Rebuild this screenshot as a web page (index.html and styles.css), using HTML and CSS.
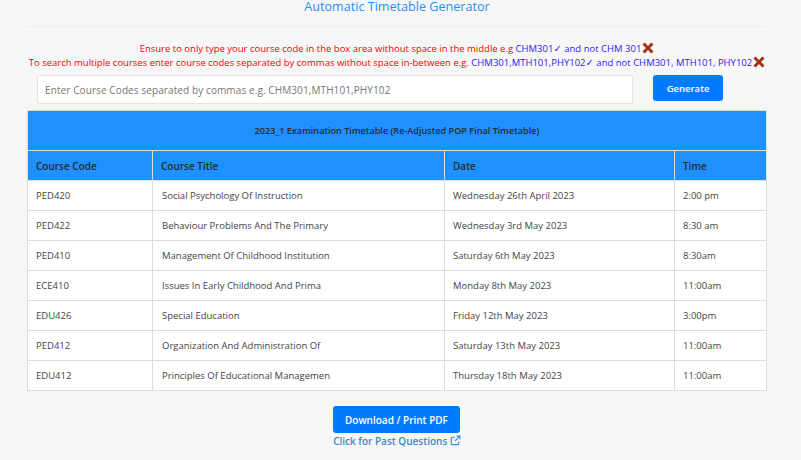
FILE: index.html
```html
<!DOCTYPE html>
<html lang="en">
<head>
<meta charset="utf-8">
<title>Automatic Timetable Generator</title>
<link rel="stylesheet" href="styles.css">
</head>
<body>
<main class="page">
  <h1 class="title">Automatic Timetable Generator</h1>
  <hr class="rule">
  <div class="notes">
    <p class="note">Ensure to only type your course code in the box area without space in the middle e.g <span class="eg">CHM301<span class="tick">✓</span> and not CHM 301</span><svg class="cross" viewBox="0 0 12 12"><path d="M1.5 1.5 10.5 10.5M10.5 1.5 1.5 10.5"/></svg></p>
    <p class="note">To search multiple courses enter course codes separated by commas without space in-between e.g. <span class="eg">CHM301,MTH101,PHY102<span class="tick">✓</span> and not CHM301, MTH101, PHY102</span><svg class="cross" viewBox="0 0 12 12"><path d="M1.5 1.5 10.5 10.5M10.5 1.5 1.5 10.5"/></svg></p>
  </div>
  <form class="search">
    <input class="field" type="text" placeholder="Enter Course Codes separated by commas e.g. CHM301,MTH101,PHY102">
    <button class="btn btn-generate" type="button">Generate</button>
  </form>
  <table class="grid">
    <colgroup>
      <col class="c1"><col class="c2"><col class="c3"><col class="c4">
    </colgroup>
    <thead>
      <tr class="caption-row"><th colspan="4">2023_1 Examination Timetable (Re-Adjusted POP Final Timetable)</th></tr>
      <tr class="head-row"><th>Course Code</th><th>Course Title</th><th>Date</th><th>Time</th></tr>
    </thead>
    <tbody>
      <tr><td>PED420</td><td>Social Psychology Of Instruction</td><td>Wednesday 26th April 2023</td><td>2:00 pm</td></tr>
      <tr><td>PED422</td><td>Behaviour Problems And The Primary</td><td>Wednesday 3rd May 2023</td><td>8:30 am</td></tr>
      <tr><td>PED410</td><td>Management Of Childhood Institution</td><td>Saturday 6th May 2023</td><td>8:30am</td></tr>
      <tr><td>ECE410</td><td>Issues In Early Childhood And Prima</td><td>Monday 8th May 2023</td><td>11:00am</td></tr>
      <tr><td>EDU426</td><td>Special Education</td><td>Friday 12th May 2023</td><td>3:00pm</td></tr>
      <tr><td>PED412</td><td>Organization And Administration Of</td><td>Saturday 13th May 2023</td><td>11:00am</td></tr>
      <tr><td>EDU412</td><td>Principles Of Educational Managemen</td><td>Thursday 18th May 2023</td><td>11:00am</td></tr>
    </tbody>
  </table>
  <div class="actions">
    <button class="btn btn-download" type="button">Download / Print PDF</button>
    <a class="past" href="#">Click for Past Questions <svg class="ext" viewBox="0 0 12 12"><path d="M9.5 7v2.6a1 1 0 0 1-1 1H2.4a1 1 0 0 1-1-1V3.500a1 1 0 0 1 1-1H5"/><path d="M7 1.200h3.800V5M10.600 1.400 5.300 6.700"/></svg></a>
  </div>
</main>
</body>
</html>
```
FILE: styles.css
```css
* { box-sizing: border-box; }
html, body { margin: 0; padding: 0; }
body {
  background: #f7f7f7;
  font-family: "Open Sans", "Noto Sans", sans-serif;
  color: #333;
  height: 460px;
  overflow: hidden;
}
.page {
  width: 740px;
  margin-left: 27px;
  display: flex;
  flex-direction: column;
}
.title {
  margin: 0;
  height: 14px;
  font-size: 12.600px;
  line-height: 14px;
  font-weight: 400;
  color: #1e90ff;
  text-align: center;
}
.rule {
  margin: 12px 0 0;
  border: 0;
  border-top: 1px solid #eeeeee;
  width: 740px;
}
.notes { margin-top: 15px; text-align: center; }
.note {
  margin: 0;
  height: 14px;
  font-size: 9.500px;
  line-height: 14px;
  color: #ff0000;
  white-space: nowrap;
}
.eg { color: #2a1aff; }
.tick { font-family: "DejaVu Sans", sans-serif; font-size: 10px; line-height: 1; }
.cross { width: 12px; height: 12px; vertical-align: -2px; margin-left: 1px; }
.cross path { fill: none; stroke: #a5301a; stroke-width: 3; }
.search {
  margin-top: 5px;
  padding-left: 10px;
  display: flex;
  align-items: flex-start;
  gap: 20px;
}
.field {
  width: 596px;
  height: 29px;
  padding: 0 7px;
  background: #fff;
  border: 1px solid #e4e4e4;
  border-radius: 2px;
  font: 10px "Open Sans", sans-serif;
  letter-spacing: 0.1px;
}
.field::placeholder { color: #777; opacity: 1; }
.btn {
  border: 0;
  border-radius: 3px;
  background: #007bff;
  color: #fff;
  font: 600 9.500px "Open Sans", sans-serif;
  padding: 0;
}
.btn-generate { width: 70px; height: 26px; }
.grid {
  margin-top: 5px;
  width: 739px;
  border-collapse: collapse;
  table-layout: fixed;
  font-size: 9.500px;
  position: relative;
  top: 1px;
}
.c1 { width: 125px; }
.c2 { width: 292px; }
.c3 { width: 230px; }
.c4 { width: 92px; }
.grid th, .grid td { border: 1px solid #dddddd; padding: 0 8px; text-align: left; white-space: nowrap; }
.grid td { background: #fff; height: 30px; color: #444; }
.grid td:nth-child(2) { padding-left: 9px; }
.grid th { background: #1e90ff; color: #2b2b2b; font-weight: 600; }
.caption-row th { height: 40px; text-align: center; font-size: 9.100px; }
.head-row th { height: 30px; font-size: 10px; }
.actions {
  margin-top: 16px;
  display: flex;
  flex-direction: column;
  align-items: center;
  gap: 1px;
}
.btn-download { width: 127px; height: 27px; font-size: 10px; margin-left: -1px; }
.past {
  font-size: 10px;
  line-height: 14px;
  font-weight: 600;
  color: #3f86c9;
  text-decoration: none;
  white-space: nowrap;
}
.ext { width: 11px; height: 11px; vertical-align: -1px; }
.ext path { fill: none; stroke: #3f8fe0; stroke-width: 1.300; }
```
